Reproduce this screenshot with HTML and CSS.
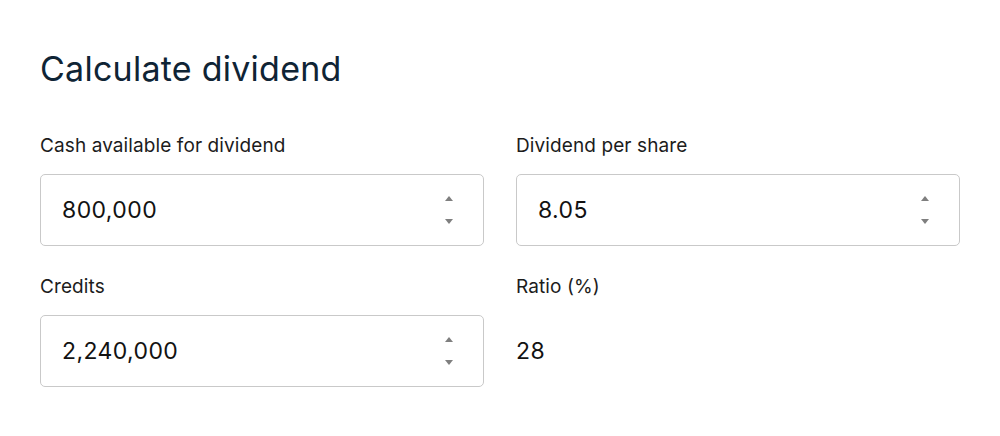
FILE: index.html
```html
<!DOCTYPE html>
<html lang="en">
<head>
<meta charset="utf-8">
<title>Calculate dividend</title>
<link rel="stylesheet" href="styles.css">
</head>
<body>
<main class="panel">
  <h1 class="title">Calculate dividend</h1>
  <div class="grid">
    <div class="cell">
      <label class="label" for="cash">Cash available for dividend</label>
      <div class="field">
        <input class="input" id="cash" type="text" value="800,000">
        <span class="spin"><span class="up"></span><span class="down"></span></span>
      </div>
    </div>
    <div class="cell">
      <label class="label" for="dps">Dividend per share</label>
      <div class="field">
        <input class="input" id="dps" type="text" value="8.05">
        <span class="spin"><span class="up"></span><span class="down"></span></span>
      </div>
    </div>
    <div class="cell">
      <label class="label" for="credits">Credits</label>
      <div class="field">
        <input class="input" id="credits" type="text" value="2,240,000">
        <span class="spin"><span class="up"></span><span class="down"></span></span>
      </div>
    </div>
    <div class="cell">
      <span class="label">Ratio (%)</span>
      <div class="static">28</div>
    </div>
  </div>
</main>
</body>
</html>
```
FILE: styles.css
```css
* { box-sizing: border-box; }
html, body { margin: 0; padding: 0; background: #ffffff; }
body {
  font-family: Inter, "Noto Sans", "Liberation Sans", sans-serif;
  color: #1a1a1a;
}
.panel { padding: 47px 40px 0 40px; }
.title {
  margin: 0;
  font-size: 34px;
  line-height: 44px;
  font-weight: 400;
  color: #0f2435;
  letter-spacing: 0.25px;
}
.grid {
  margin-top: 43px;
  display: grid;
  grid-template-columns: 444px 444px;
  column-gap: 32px;
  row-gap: 29px;
}
.cell { display: flex; flex-direction: column; }
.label {
  font-size: 19px;
  line-height: 24px;
  margin-bottom: 16px;
  color: #1c1c1c;
  letter-spacing: 0.1px;
}
.field {
  height: 72px;
  border: 1px solid #c9c9c9;
  border-radius: 5px;
  display: flex;
  align-items: center;
  padding: 0 30px 0 21px;
}
.input {
  flex: 1;
  min-width: 0;
  border: 0;
  outline: none;
  padding: 0;
  font-family: inherit;
  font-size: 23px;
  letter-spacing: 0.4px;
  color: #121212;
  background: transparent;
}
.spin {
  display: flex;
  flex-direction: column;
  align-items: center;
  gap: 18px;
}
.up, .down {
  width: 0; height: 0;
  border-left: 4.5px solid transparent;
  border-right: 4.5px solid transparent;
}
.up { border-bottom: 5px solid #7f7f7f; }
.down { border-top: 5px solid #7f7f7f; }
.static {
  height: 72px;
  display: flex;
  align-items: center;
  font-size: 23px;
  letter-spacing: 0.4px;
  color: #121212;
}
```
